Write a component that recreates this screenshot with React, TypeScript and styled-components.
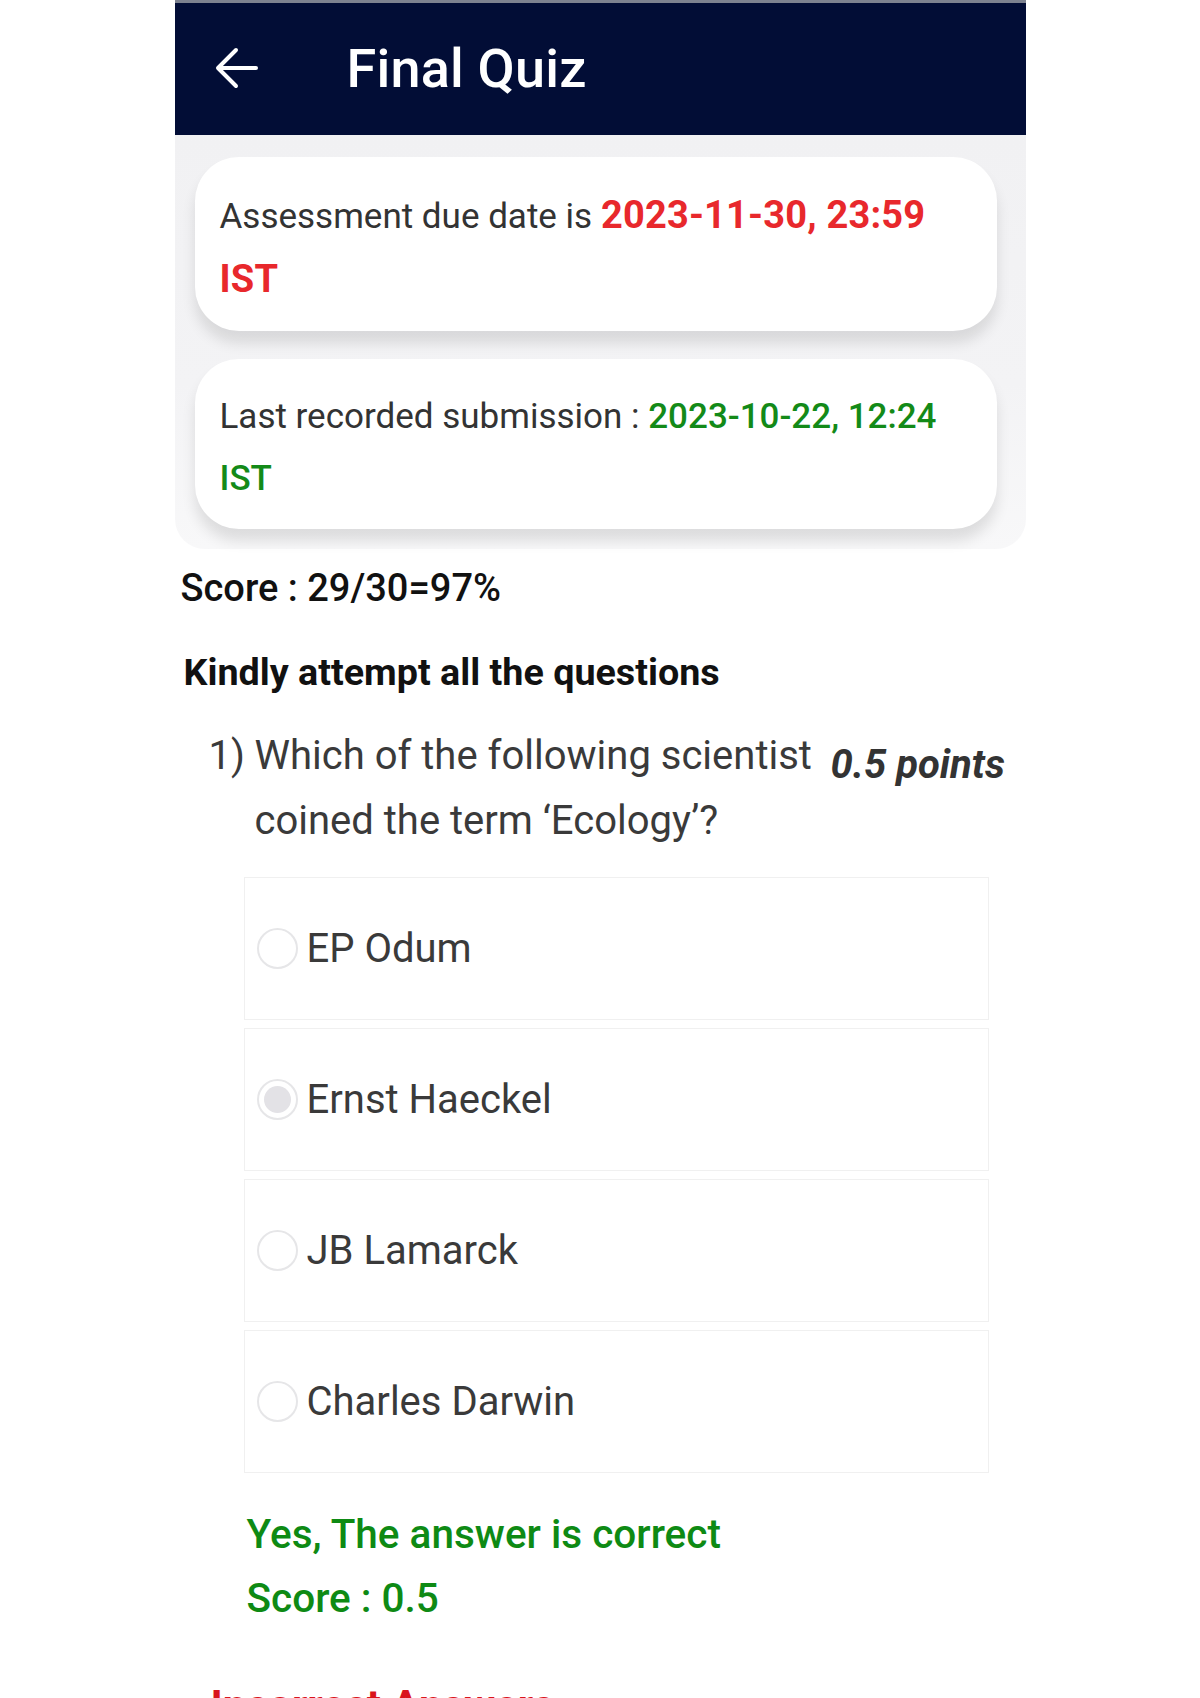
import React from 'react'
import styled, { createGlobalStyle } from 'styled-components'

const GlobalStyle = createGlobalStyle`
  html, body {
    margin: 0;
    padding: 0;
    background: #ffffff;
  }
  body {
    font-family: Roboto, "Liberation Sans", Arial, sans-serif;
    color: #333;
    overflow: hidden;
  }
`

const Page = styled.div`
  width: 851px;
  margin: 0 auto;
  height: 1698px;
  overflow: hidden;
`
const TopEdge = styled.div`
  height: 3px;
  background: #7d8290;
`
const Header = styled.header`
  height: 132px;
  background: #020d36;
  display: flex;
  align-items: center;
  padding-left: 40px;
  gap: 88px;
  color: #fff;
  box-sizing: border-box;
  padding-bottom: 2px;
`
const Title = styled.h1`
  margin: 0;
  font-size: 54px;
  font-weight: 500;
  letter-spacing: 0.2px;
`
const Panel = styled.section`
  background: linear-gradient(180deg, #f1f1f3 0%, #f3f3f5 60%, #f8f8f9 100%);
  padding: 22px 29px 20px 20px;
  display: flex;
  flex-direction: column;
  gap: 28px;
  border-radius: 0 0 30px 30px;
`
const InfoCard = styled.div`
  background: #fff;
  border-radius: 44px;
  padding: 27px 25px 19px 25px;
  font-size: 35px;
  line-height: 62px;
  color: #333;
  box-shadow: 0 12px 14px rgba(0, 0, 0, 0.11);
`
const Highlight = styled.span<{ $tone: 'red' | 'green' }>`
  color: ${p => (p.$tone === 'red' ? '#e8282c' : '#138a18')};
  font-weight: ${p => (p.$tone === 'red' ? 700 : 500)};
  font-size: ${p => (p.$tone === 'red' ? '38px' : 'inherit')};
  letter-spacing: ${p => (p.$tone === 'red' ? '0.2px' : 'normal')};
`
const Score = styled.div`
  margin: 14px 0 0 6px;
  font-size: 38px;
  line-height: 50px;
  font-weight: 500;
  color: #111;
`
const Instruction = styled.div`
  margin: 34px 0 0 9px;
  font-size: 37.7px;
  line-height: 50px;
  font-weight: 700;
  color: #111;
`
const Question = styled.div`
  margin: 26px 0 0 34px;
  display: grid;
  grid-template-columns: 46px 576px auto;
  font-size: 40px;
  line-height: 65px;
  color: #3a3a3a;
`
const Points = styled.span`
  font-weight: 700;
  font-style: italic;
  color: #333;
  padding-top: 9px;
  white-space: nowrap;
`
const Options = styled.div`
  margin: 24px 0 0 69px;
  width: 745px;
  display: flex;
  flex-direction: column;
  gap: 8px;
`
const Option = styled.label`
  height: 143px;
  box-sizing: border-box;
  border: 1px solid #f0f0f0;
  display: flex;
  align-items: center;
  padding-left: 12px;
  gap: 9px;
  font-size: 40px;
  color: #3a3a3a;
`
const Radio = styled.span<{ $checked?: boolean }>`
  width: 41px;
  height: 41px;
  box-sizing: border-box;
  border-radius: 50%;
  border: 2px solid #e6e6e8;
  display: flex;
  align-items: center;
  justify-content: center;
  &::after {
    content: '';
    width: 27px;
    height: 27px;
    border-radius: 50%;
    background: ${p => (p.$checked ? '#e3e2e6' : 'transparent')};
  }
`
const Feedback = styled.div`
  margin: 29px 0 0 72px;
  font-size: 40.5px;
  line-height: 64px;
  font-weight: 500;
  color: #0e8a14;
`
const NextHeading = styled.div`
  margin: 44px 0 0 36px;
  font-size: 42px;
  line-height: 64px;
  font-weight: 700;
  color: #d9141c;
`

const BackArrow = () => (
  <svg width="44" height="42" viewBox="0 0 44 42" fill="none" stroke="#fff" strokeWidth="4" strokeLinecap="round" strokeLinejoin="round">
    <path d="M41 21H4" />
    <path d="M21 3L3 21l18 18" />
  </svg>
)

const options = [
  { id: 1, label: 'EP Odum', checked: false },
  { id: 2, label: 'Ernst Haeckel', checked: true },
  { id: 3, label: 'JB Lamarck', checked: false },
  { id: 4, label: 'Charles Darwin', checked: false }
]

const App = () => (
  <>
    <GlobalStyle />
    <Page>
      <TopEdge />
      <Header>
        <BackArrow />
        <Title>Final Quiz</Title>
      </Header>
      <Panel>
        <InfoCard>
          Assessment due date is <Highlight $tone="red">2023-11-30, 23:59 IST</Highlight>
        </InfoCard>
        <InfoCard>
          Last recorded submission : <Highlight $tone="green">2023-10-22, 12:24 IST</Highlight>
        </InfoCard>
      </Panel>
      <Score>Score : 29/30=97%</Score>
      <Instruction>Kindly attempt all the questions</Instruction>
      <Question>
        <span>1)</span>
        <span>Which of the following scientist coined the term ‘Ecology’?</span>
        <Points>0.5 points</Points>
      </Question>
      <Options>
        {options.map(item => (
          <Option key={item.id}>
            <Radio $checked={item.checked} />
            {item.label}
          </Option>
        ))}
      </Options>
      <Feedback>
        Yes, The answer is correct
        <br />
        Score : 0.5
      </Feedback>
      <NextHeading>Incorrect Answers</NextHeading>
    </Page>
  </>
)

export default App
